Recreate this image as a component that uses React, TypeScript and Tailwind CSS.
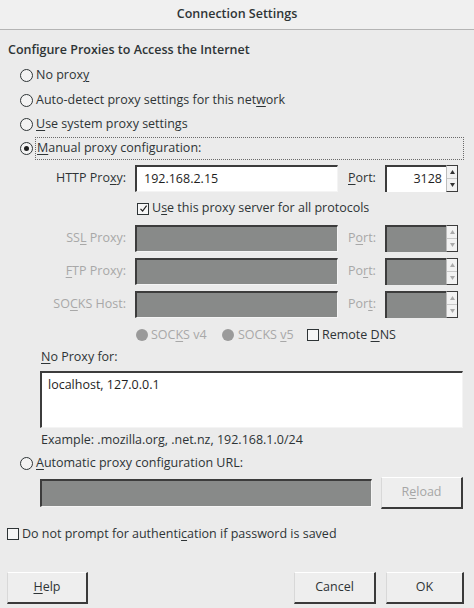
import React from 'react';

const font = { fontFamily: '"Open Sans", "Noto Sans", sans-serif' };

const U: React.FC<{ children: React.ReactNode }> = ({ children }) => (
  <span className="underline underline-offset-[2px] decoration-1">{children}</span>
);

const Radio: React.FC<{ checked?: boolean; disabled?: boolean }> = ({ checked, disabled }) =>
  disabled ? (
    <span className="inline-block w-[12px] h-[12px] rounded-full bg-[#9a9a9a] shrink-0" />
  ) : (
    <span className="w-[13px] h-[13px] rounded-full border border-[#2e3436] bg-[#f3f3f3] flex items-center justify-center shrink-0">
      {checked && <span className="w-[5px] h-[5px] rounded-full bg-[#1e1e1e]" />}
    </span>
  );

const Check: React.FC<{ checked?: boolean }> = ({ checked }) => (
  <span className="w-[12px] h-[12px] border border-[#2e3436] bg-[#f6f6f6] flex items-center justify-center shrink-0">
    {checked && (
      <svg width="9" height="9" viewBox="0 0 9 9">
        <path d="M1.5 4.8 L3.6 7 L7.6 1.6" fill="none" stroke="#222" strokeWidth="1.2" />
      </svg>
    )}
  </span>
);

const Field: React.FC<{ w: string; disabled?: boolean; h?: string; children?: React.ReactNode }> = ({ w, disabled, h, children }) => (
  <div
    className={`${w} ${h ?? 'h-[27px]'} border-t-2 border-l-2 border-[#3c3c3c] border-r border-b border-r-[#f4f4f4] border-b-[#f4f4f4] ${
      disabled ? 'bg-[#888a89]' : 'bg-white'
    } flex items-center px-[7px] text-[12.5px] text-[#1e1e1e]`}
  >
    {children}
  </div>
);

const Spin: React.FC<{ disabled?: boolean; value?: string }> = ({ disabled, value }) => (
  <div className="flex h-[27px]">
    <div
      className={`w-[61px] h-full border-t-2 border-l-2 border-[#3c3c3c] ${
        disabled ? 'bg-[#888a89]' : 'bg-white'
      } flex items-center justify-end pr-[4px] text-[12.5px] text-[#1e1e1e]`}
    >
      {value}
    </div>
    <div className="w-[12px] h-full border border-[#3c3c3c] border-l-[#bdbdbd] bg-[#f2f2f2] flex flex-col">
      <div className="flex-1 flex items-center justify-center border-b border-[#c8c8c8]">
        <svg width="5" height="4" viewBox="0 0 5 4">
          <path d="M2.5 0 L5 4 L0 4 Z" fill={disabled ? '#aaa' : '#333'} />
        </svg>
      </div>
      <div className="flex-1 flex items-center justify-center">
        <svg width="5" height="4" viewBox="0 0 5 4">
          <path d="M0 0 L5 0 L2.5 4 Z" fill={disabled ? '#aaa' : '#333'} />
        </svg>
      </div>
    </div>
  </div>
);

const Button: React.FC<{ w: string; h?: string; disabled?: boolean; children: React.ReactNode }> = ({ w, h, disabled, children }) => (
  <div
    className={`${w} ${h ?? 'h-[32px]'} bg-[#eeeeee] border-t border-l border-t-white border-l-[#d8d8d8] border-r-2 border-b-2 border-[#3a3a3a] flex items-center justify-center text-[12.5px] ${
      disabled ? 'text-[#a6a6a6]' : 'text-[#2e3436]'
    }`}
  >
    {children}
  </div>
);

const ProxyRow: React.FC<{ label: React.ReactNode; port: React.ReactNode; disabled?: boolean; value?: string; portValue?: string }> = ({
  label,
  port,
  disabled,
  value,
  portValue,
}) => (
  <div className={`flex items-center h-[27px] text-[12.5px] ${disabled ? 'text-[#a8a8a8]' : 'text-[#2e3436]'}`}>
    <div className="w-[126px] text-right">{label}</div>
    <div className="ml-[9px]">
      <Field w="w-[203px]" disabled={disabled}>
        {value}
      </Field>
    </div>
    <div className="ml-[10px] w-[37px]">{port}</div>
    <Spin disabled={disabled} value={portValue} />
  </div>
);

export default function App() {
  return (
    <div className="w-[474px] h-[608px] bg-[#ebebeb] text-[#2e3436] overflow-hidden" style={font}>
      <div className="h-[30px] bg-[#f0f0f0] border-b border-[#b4b4b4] flex items-center justify-center text-[12.5px] font-semibold text-[#2e3436]">
        Connection Settings
      </div>

      <div className="mt-[8px] h-[25px] flex items-center pl-[8px] text-[12.5px] font-semibold">
        Configure Proxies to Access the Internet
      </div>

      <div className="h-[25px] flex items-center pl-[20px] gap-[3px] text-[12.5px]">
        <Radio />
        <span>
          No prox<U>y</U>
        </span>
      </div>
      <div className="h-[24px] flex items-center pl-[20px] gap-[3px] text-[12.5px]">
        <Radio />
        <span>
          Auto-detect proxy settings for this net<U>w</U>ork
        </span>
      </div>
      <div className="h-[24px] flex items-center pl-[20px] gap-[3px] text-[12.5px]">
        <Radio />
        <span>
          <U>U</U>se system proxy settings
        </span>
      </div>
      <div className="h-[24px] flex items-center pl-[20px] pr-[10px] text-[12.5px]">
        <Radio checked />
        <div className="ml-[2px] flex-1 h-[23px] border border-dotted border-[#6a6a6a] flex items-center pl-[1px]">
          <span>
            <U>M</U>anual proxy configuration:
          </span>
        </div>
      </div>

      <div className="mt-[5px]">
        <ProxyRow
          label={
            <>
              HTTP Pro<U>x</U>y:
            </>
          }
          port={
            <>
              <U>P</U>ort:
            </>
          }
          value="192.168.2.15"
          portValue="3128"
        />
      </div>

      <div className="h-[33px] flex items-center pl-[137px] gap-[3px] text-[12.5px]">
        <Check checked />
        <span>
          U<U>s</U>e this proxy server for all protocols
        </span>
      </div>

      <ProxyRow
        disabled
        label={
          <>
            SS<U>L</U> Proxy:
          </>
        }
        port={
          <>
            P<U>o</U>rt:
          </>
        }
      />
      <div className="mt-[6px]">
        <ProxyRow
          disabled
          label={
            <>
              <U>F</U>TP Proxy:
            </>
          }
          port={
            <>
              Po<U>r</U>t:
            </>
          }
        />
      </div>
      <div className="mt-[6px]">
        <ProxyRow
          disabled
          label={
            <>
              SO<U>C</U>KS Host:
            </>
          }
          port={
            <>
              Por<U>t</U>:
            </>
          }
        />
      </div>

      <div className="mt-[4px] h-[26px] flex items-center pl-[136px] text-[12.5px]">
        <Radio disabled />
        <span className="ml-[3px] w-[71px] text-[#a8a8a8]">
          SOC<U>K</U>S v4
        </span>
        <Radio disabled />
        <span className="ml-[4px] w-[69px] text-[#a8a8a8]">
          SOCKS <U>v</U>5
        </span>
        <Check />
        <span className="ml-[3px]">
          Remote <U>D</U>NS
        </span>
      </div>

      <div className="h-[19px] flex items-center pl-[41px] text-[12.5px]">
        <span>
          <U>N</U>o Proxy for:
        </span>
      </div>

      <div className="mt-[4px] ml-[40px] w-[423px] h-[57px] bg-white border-t-2 border-l-2 border-[#3c3c3c] border-r border-b border-r-[#f4f4f4] border-b-[#f4f4f4] px-[6px] pt-[3px] text-[12.5px] text-[#1e1e1e]">
        localhost, 127.0.0.1
      </div>

      <div className="h-[24px] flex items-center pl-[41px] text-[12.5px]">Example: .mozilla.org, .net.nz, 192.168.1.0/24</div>

      <div className="h-[23px] flex items-center pl-[20px] gap-[3px] text-[12.5px]">
        <Radio />
        <span>
          <U>A</U>utomatic proxy configuration URL:
        </span>
      </div>

      <div className="mt-[2px] h-[32px] flex items-center pl-[40px]">
        <Field w="w-[332px]" h="h-[28px]" disabled />
        <div className="ml-[9px]">
          <Button w="w-[82px]" disabled>
            <span>
              R<U>e</U>load
            </span>
          </Button>
        </div>
      </div>

      <div className="mt-[13px] h-[24px] flex items-center pl-[7px] gap-[3px] text-[12.5px]">
        <Check />
        <span>
          Do not prompt for authenti<U>c</U>ation if password is saved
        </span>
      </div>

      <div className="mt-[26px] flex items-center px-[7px]">
        <Button w="w-[81px]">
          <span>
            <U>H</U>elp
          </span>
        </Button>
        <div className="flex-1" />
        <Button w="w-[82px]">Cancel</Button>
        <div className="ml-[10px]">
          <Button w="w-[78px]">OK</Button>
        </div>
        <div className="w-[3px]" />
      </div>
    </div>
  );
}
